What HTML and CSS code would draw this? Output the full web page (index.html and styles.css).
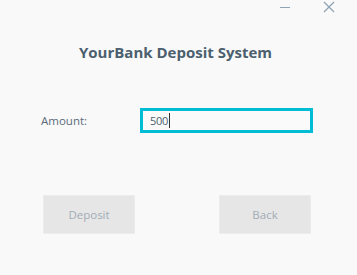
FILE: index.html
```html
<!DOCTYPE html>
<html lang="en">

<head>
    <meta charset="UTF-8">
    <meta name="viewport" content="width=device-width, initial-scale=1.0">
    <title>YourBank | Deposit</title>
    <link rel="stylesheet" href="styles.css">
</head>

<body>
    <div class="window">
        <div class="title-bar">
            <span class="win-btn minimize">
                <svg width="12" height="12" viewBox="0 0 12 12">
                    <line x1="1" y1="6.5" x2="11" y2="6.5" stroke="currentColor" stroke-width="1"></line>
                </svg>
            </span>
            <span class="win-btn close">
                <svg width="12" height="12" viewBox="0 0 12 12">
                    <line x1="1" y1="1" x2="11" y2="11" stroke="currentColor" stroke-width="1.2"></line>
                    <line x1="11" y1="1" x2="1" y2="11" stroke="currentColor" stroke-width="1.2"></line>
                </svg>
            </span>
        </div>

        <h1 class="heading">YourBank Deposit System</h1>

        <div class="form-row">
            <label for="amount">Amount:</label>
            <div class="field" id="amount">500<span class="caret"></span></div>
        </div>

        <div class="button-row">
            <button type="button">Deposit</button>
            <button type="button">Back</button>
        </div>
    </div>
</body>

</html>
```

FILE: styles.css
```css
* {
    margin: 0;
    padding: 0;
    box-sizing: border-box;
    font-family: "Open Sans", "Noto Sans", sans-serif;
}

body {
    background-color: #f9f9f9;
    width: 357px;
    height: 275px;
    overflow: hidden;
}

.window {
    display: flex;
    flex-direction: column;
    height: 100%;
}

.title-bar {
    display: flex;
    justify-content: flex-end;
    height: 20px;
    padding-right: 6px;
}

.win-btn {
    width: 44px;
    display: flex;
    align-items: flex-start;
    justify-content: center;
    padding-top: 1px;
    color: #8fa3b3;
}

.heading {
    margin-top: 22px;
    text-align: center;
    font-size: 15px;
    font-weight: bold;
    color: #4b5f6e;
    padding-right: 6px;
}

.form-row {
    display: flex;
    align-items: center;
    margin-top: 46px;
    padding-left: 41px;
}

label {
    width: 99px;
    font-size: 11.5px;
    color: #5b6b7a;
}

.field {
    display: flex;
    align-items: center;
    width: 173px;
    height: 25px;
    border: 3px solid #00bcd4;
    background-color: #fafafa;
    padding: 0 7px;
    font-size: 11px;
    letter-spacing: -0.3px;
    color: #4b5f6e;
}

.caret {
    width: 1px;
    height: 15px;
    margin-left: 1px;
    background-color: #333;
}

.button-row {
    display: flex;
    gap: 84px;
    margin-top: 62px;
    padding-left: 43px;
}

button {
    width: 92px;
    height: 39px;
    background-color: #e6e6e6;
    border: 1px solid #ececec;
    font-size: 11.5px;
    color: #a2acb6;
}
```
